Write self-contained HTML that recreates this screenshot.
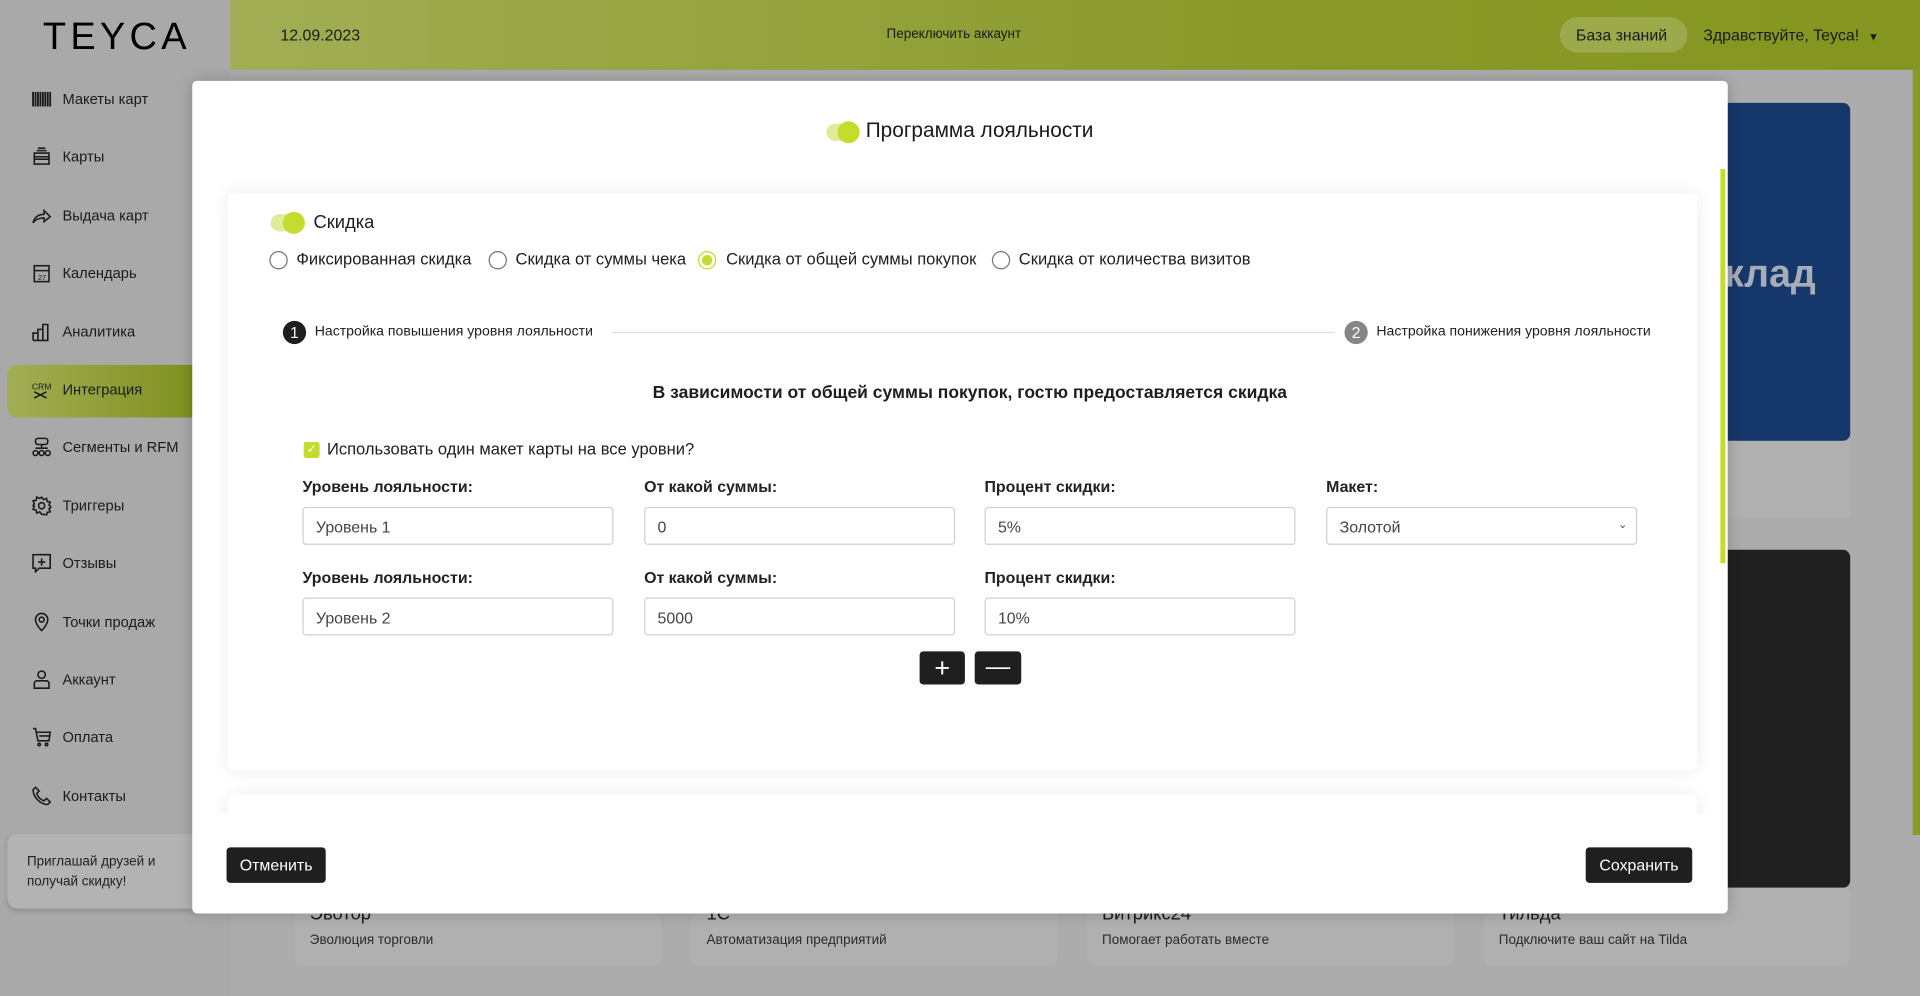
<!DOCTYPE html>
<html><head><meta charset="utf-8"><style>
*{box-sizing:border-box;margin:0;padding:0}
html,body{width:1920px;height:995px;overflow:hidden;background:#ababab}
#w{position:absolute;left:0;top:0;width:1568px;height:813px;transform:scale(1.22449);transform-origin:0 0;font-family:"Liberation Sans","DejaVu Sans",sans-serif;color:#1e1e1e;background:#acacac;overflow:hidden}
.abs{position:absolute}
.side{left:0;top:0;width:188px;height:813px;background:#a9a9a9}
.logo{left:35px;top:12px;font-size:31px;letter-spacing:3.5px;color:#000}
.nav{left:26px;font-size:12px;color:#1b1b1b;display:flex;align-items:center;gap:9px}
.nav svg{width:16px;height:16px;fill:none;stroke:#1b1b1b;stroke-width:1.3}
.hdr{left:188px;top:0;width:1380px;height:57px;background:linear-gradient(90deg,#a2ae55,#8a9a2a 60%,#84961f)}
.modal{left:157px;top:66px;width:1254px;height:680px;background:#fff;border-radius:4px;box-shadow:0 0 12px rgba(0,0,0,.2)}
.card{background:#fff;border-radius:4px;box-shadow:0 0 14px rgba(0,0,0,.08)}
.tg{width:30px;height:14px;border-radius:7px;background:#dfeb98;position:absolute}
.tg:after{content:"";position:absolute;right:-1px;top:-2px;width:18px;height:18px;border-radius:50%;background:#c3dc2e}
.radio{width:15px;height:15px;border-radius:50%;border:1.5px solid #777;position:absolute}
.lbl{font-size:13px;font-weight:bold;color:#222;position:absolute}
.inp{position:absolute;width:254px;height:31px;border:1px solid #cfcfcf;border-radius:3px;font-size:13px;color:#444;padding:8px 10px}
.btn{position:absolute;background:#1f1f1f;color:#fff;border-radius:3px;font-size:13px;display:flex;align-items:center;justify-content:center}
.bc{position:absolute;background:#b0b0b0;border-radius:6px}
.bt{font-size:15px;color:#1a1a1a;position:absolute}
.bs{font-size:11px;color:#2a2a2a;position:absolute}
</style></head><body><div id="w">
<div class="abs side"></div>
<div class="abs logo">TEYCA</div>
<div class="abs" style="left:6px;top:298px;width:160px;height:43px;border-radius:8px;background:linear-gradient(90deg,#a2ae55,#7d8f1c)"></div>
<div class="abs nav" style="top:73px"><svg viewBox="0 0 16 16"><path d="M1 2v12M3 2v12M5 2v12M7 2v12M9 2v12M11 2v12M13 2v12M15 2v12" stroke-width="1.5"/></svg>Макеты карт</div>
<div class="abs nav" style="top:120px"><svg viewBox="0 0 16 16"><rect x="2" y="5" width="12" height="9"/><path d="M4 3h8M5 1h6M2 8h12M2 10h12"/></svg>Карты</div>
<div class="abs nav" style="top:168px"><svg viewBox="0 0 16 16"><path d="M1 14c1-5 5-7 9-7V4l5 5-5 4v-3c-4 0-7 1-9 4z"/></svg>Выдача карт</div>
<div class="abs nav" style="top:215px"><svg viewBox="0 0 16 16"><rect x="2" y="2" width="12" height="13"/><path d="M2 6h12"/><text x="5" y="13.5" font-size="6" fill="#1b1b1b" stroke="none">27</text></svg>Календарь</div>
<div class="abs nav" style="top:263px"><svg viewBox="0 0 16 16"><path d="M1 15V9h4v6M5 15V6h4v9M9 15V2h4v13H1"/></svg>Аналитика</div>
<div class="abs nav" style="top:310px"><svg viewBox="0 0 16 16"><text x="0" y="8" font-size="7" fill="#1b1b1b" stroke="none">CRM</text><path d="M2 10l10 5M12 10L2 15"/></svg>Интеграция</div>
<div class="abs nav" style="top:357px"><svg viewBox="0 0 16 16"><rect x="3" y="1" width="10" height="5" rx="2"/><path d="M8 6v3M3 9h10"/><circle cx="3" cy="13" r="2"/><circle cx="8" cy="13" r="2"/><circle cx="13" cy="13" r="2"/></svg>Сегменты и RFM</div>
<div class="abs nav" style="top:405px"><svg viewBox="0 0 16 16"><circle cx="8" cy="8" r="2.5"/><path d="M8 1l1.5 2 2.5-1 .5 2.5 2.5.5-1 2.5 2 1.5-2 1.5 1 2.5-2.5.5-.5 2.5-2.5-1L8 15l-1.5-2-2.5 1-.5-2.5L1 11l1-2.5L1 8l1-1.5L1 4l2.5-.5L4 1l2.5 1z"/></svg>Триггеры</div>
<div class="abs nav" style="top:452px"><svg viewBox="0 0 16 16"><path d="M1 1h14v11H6l-3 3v-3H1z"/><path d="M8 4v6M5 7h6"/></svg>Отзывы</div>
<div class="abs nav" style="top:500px"><svg viewBox="0 0 16 16"><path d="M8 15s-5-5-5-9a5 5 0 0110 0c0 4-5 9-5 9z"/><circle cx="8" cy="6" r="2"/></svg>Точки продаж</div>
<div class="abs nav" style="top:547px"><svg viewBox="0 0 16 16"><circle cx="8" cy="4" r="3"/><path d="M2 15v-4c0-1 1-2 2-2h8c1 0 2 1 2 2v4z"/></svg>Аккаунт</div>
<div class="abs nav" style="top:594px"><svg viewBox="0 0 16 16"><path d="M1 1h2l2 10h9l1-7H4M6 7h8"/><circle cx="6" cy="14" r="1"/><circle cx="12" cy="14" r="1"/></svg>Оплата</div>
<div class="abs nav" style="top:642px"><svg viewBox="0 0 16 16"><path d="M3 1l3 3-2 2c1 3 3 5 6 6l2-2 3 3-2 2C7 15 1 9 1 3z"/></svg>Контакты</div>
<div class="abs" style="left:6px;top:681px;width:170px;height:61px;border-radius:8px;background:#b3b3b3;box-shadow:0 2px 4px rgba(0,0,0,.15)"></div>
<div class="abs" style="left:22px;top:696px;font-size:11px;line-height:16px;color:#222">Приглашай друзей и<br>получай скидку!</div>
<div class="abs hdr"></div>
<div class="abs" style="left:229px;top:21px;font-size:13px;color:#1a1a1a">12.09.2023</div>
<div class="abs" style="left:724px;top:22px;font-size:11px;color:#1a1a1a">Переключить аккаунт</div>
<div class="abs" style="left:1274px;top:14px;width:104px;height:29px;border-radius:15px;background:rgba(255,255,255,.18)"></div>
<div class="abs" style="left:1287px;top:21px;font-size:13px;color:#1a1a1a">База знаний</div>
<div class="abs" style="left:1391px;top:21px;font-size:13px;color:#1a1a1a">Здравствуйте, Teyca! &nbsp;<span style="font-size:9px">▼</span></div>
<div class="abs" style="left:1562px;top:57px;width:6px;height:625px;background:#8a9a2a"></div>
<div class="abs" style="left:1300px;top:84px;width:211px;height:276px;background:#15376b;border-radius:6px"></div>
<div class="abs" style="left:1408px;top:205px;font-size:32px;font-weight:bold;color:#a7adb5">клад</div>
<div class="bc" style="left:1300px;top:360px;width:211px;height:64px;border-radius:0 0 6px 6px"></div>
<div class="abs" style="left:1300px;top:449px;width:211px;height:276px;background:#202020;border-radius:6px"></div>
<div class="bc" style="left:241px;top:725px;width:299px;height:63px"></div>
<div class="bc" style="left:564px;top:725px;width:300px;height:63px"></div>
<div class="bc" style="left:888px;top:725px;width:299px;height:63px"></div>
<div class="bc" style="left:1212px;top:725px;width:299px;height:63px"></div>
<div class="bt" style="left:253px;top:738px">Эвотор</div><div class="bs" style="left:253px;top:762px">Эволюция торговли</div>
<div class="bt" style="left:577px;top:738px">1С</div><div class="bs" style="left:577px;top:762px">Автоматизация предприятий</div>
<div class="bt" style="left:900px;top:738px">Битрикс24</div><div class="bs" style="left:900px;top:762px">Помогает работать вместе</div>
<div class="bt" style="left:1224px;top:738px">Тильда</div><div class="bs" style="left:1224px;top:762px">Подключите ваш сайт на Tilda</div>
<div class="abs modal"></div>
<div class="abs" style="left:1405px;top:138px;width:4px;height:322px;background:#c3dc2e"></div>
<div class="tg" style="left:675px;top:101px;width:26px"></div>
<div class="abs" style="left:707px;top:97px;font-size:17px;color:#1a1a1a">Программа лояльности</div>
<div class="abs card" style="left:186px;top:158px;width:1200px;height:471px"></div>
<div class="abs card" style="left:186px;top:649px;width:1200px;height:40px;border-radius:4px 4px 0 0"></div>
<div class="abs" style="left:160px;top:665px;width:1240px;height:78px;background:#fff"></div>
<div class="tg" style="left:221px;top:175px;width:27px"></div>
<div class="abs" style="left:256px;top:173px;font-size:15px">Скидка</div>
<div class="radio" style="left:220px;top:205px"></div>
<div class="abs" style="left:242px;top:204px;font-size:13.5px">Фиксированная скидка</div>
<div class="radio" style="left:399px;top:205px"></div>
<div class="abs" style="left:421px;top:204px;font-size:13.5px">Скидка от суммы чека</div>
<div class="radio" style="left:570px;top:205px;border-color:#c3dc2e;background:radial-gradient(circle,#c3dc2e 4px,#fff 4.5px)"></div>
<div class="abs" style="left:593px;top:204px;font-size:13.5px">Скидка от общей суммы покупок</div>
<div class="radio" style="left:810px;top:205px"></div>
<div class="abs" style="left:832px;top:204px;font-size:13.5px">Скидка от количества визитов</div>
<div class="abs" style="left:231px;top:262px;width:19px;height:19px;border-radius:50%;background:#1e1e1e;color:#fff;font-size:13px;text-align:center;line-height:19px">1</div>
<div class="abs" style="left:257px;top:265px;font-size:11.5px">Настройка повышения уровня лояльности</div>
<div class="abs" style="left:500px;top:271px;width:590px;height:1px;background:#ddd"></div>
<div class="abs" style="left:1098px;top:262px;width:19px;height:19px;border-radius:50%;background:#858585;color:#fff;font-size:13px;text-align:center;line-height:19px">2</div>
<div class="abs" style="left:1124px;top:265px;font-size:11.5px">Настройка понижения уровня лояльности</div>
<div class="abs" style="left:186px;top:313px;width:1212px;text-align:center;font-size:14.3px;font-weight:bold">В зависимости от общей суммы покупок, гостю предоставляется скидка</div>
<div class="abs" style="left:248px;top:361px;width:13px;height:13px;background:#c3dc2e;border-radius:2px;color:#fff;font-size:10px;text-align:center;line-height:13px">✓</div>
<div class="abs" style="left:267px;top:359px;font-size:13.5px">Использовать один макет карты на все уровни?</div>
<div class="lbl" style="left:247px;top:390px">Уровень лояльности:</div>
<div class="lbl" style="left:526px;top:390px">От какой суммы:</div>
<div class="lbl" style="left:804px;top:390px">Процент скидки:</div>
<div class="lbl" style="left:1083px;top:390px">Макет:</div>
<div class="inp" style="left:247px;top:414px">Уровень 1</div>
<div class="inp" style="left:526px;top:414px">0</div>
<div class="inp" style="left:804px;top:414px">5%</div>
<div class="inp" style="left:1083px;top:414px">Золотой<span style="position:absolute;right:7px;top:8px;font-size:9px">⌄</span></div>
<div class="lbl" style="left:247px;top:464px">Уровень лояльности:</div>
<div class="lbl" style="left:526px;top:464px">От какой суммы:</div>
<div class="lbl" style="left:804px;top:464px">Процент скидки:</div>
<div class="inp" style="left:247px;top:488px">Уровень 2</div>
<div class="inp" style="left:526px;top:488px">5000</div>
<div class="inp" style="left:804px;top:488px">10%</div>
<div class="btn" style="left:751px;top:532px;width:37px;height:27px;font-size:22px;font-weight:300">+</div>
<div class="btn" style="left:796px;top:532px;width:38px;height:27px;font-size:20px">—</div>
<div class="btn" style="left:185px;top:692px;width:81px;height:29px">Отменить</div>
<div class="btn" style="left:1295px;top:692px;width:87px;height:29px">Сохранить</div>
</div></body></html>
